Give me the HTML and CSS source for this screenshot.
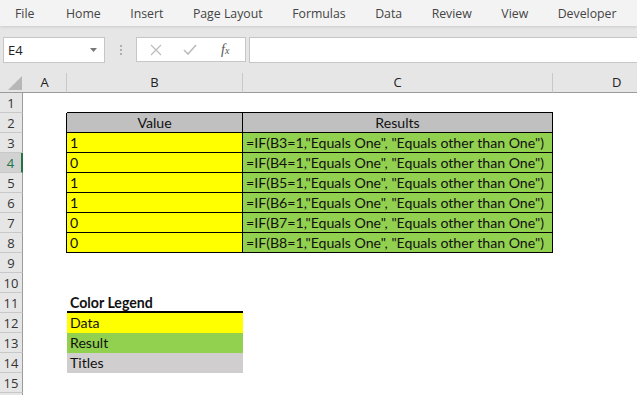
FILE: index.html
```html
<!DOCTYPE html>
<html lang="en">
<head>
  <meta charset="UTF-8">
  <title>IF formula</title>
  <link rel="stylesheet" href="styles.css">
</head>
<body>

  <div class="menubar">
    <span class="first">File</span>
    <span>Home</span>
    <span>Insert</span>
    <span>Page Layout</span>
    <span>Formulas</span>
    <span>Data</span>
    <span>Review</span>
    <span>View</span>
    <span>Developer</span>
  </div>

  <div class="toolbar">
    <div class="namebox">
      <span>E4</span>
      <svg width="7" height="4" viewBox="0 0 7 4"><path d="M0 0h7L3.5 4z" fill="#777"/></svg>
    </div>
    <div class="grip"><i></i><i></i><i></i></div>
    <div class="fxbox">
      <svg width="12" height="12" viewBox="0 0 12 12"><path d="M1 1l10 10M11 1L1 11" stroke="#bdbdbd" stroke-width="1.3" fill="none"/></svg>
      <svg width="14" height="12" viewBox="0 0 14 12"><path d="M1 6l4 4 8-9" stroke="#bdbdbd" stroke-width="1.6" fill="none"/></svg>
      <span class="fx">f<sub>x</sub></span>
    </div>
    <div class="formula"></div>
  </div>

  <div class="sheet">
    <div class="row colhead">
      <div class="rh corner"><svg width="14" height="14" viewBox="0 0 14 14"><path d="M14 0v14H0z" fill="#b7b7b7"/></svg></div>
      <div class="c a">A</div>
      <div class="c b">B</div>
      <div class="c cc">C</div>
      <div class="c d">D</div>
    </div>

    <div class="row"><div class="rh">1</div><div class="c a"></div><div class="c b top"></div><div class="c cc top"></div></div>
    <div class="row"><div class="rh">2</div><div class="c a edge"></div><div class="c b box title center">Value</div><div class="c cc box title center">Results</div></div>
    <div class="row"><div class="rh">3</div><div class="c a edge"></div><div class="c b box data">1</div><div class="c cc box result">=IF(B3=1,"Equals One", "Equals other than One")</div></div>
    <div class="row"><div class="rh sel">4</div><div class="c a edge"></div><div class="c b box data">0</div><div class="c cc box result">=IF(B4=1,"Equals One", "Equals other than One")</div></div>
    <div class="row"><div class="rh">5</div><div class="c a edge"></div><div class="c b box data">1</div><div class="c cc box result">=IF(B5=1,"Equals One", "Equals other than One")</div></div>
    <div class="row"><div class="rh">6</div><div class="c a edge"></div><div class="c b box data">1</div><div class="c cc box result">=IF(B6=1,"Equals One", "Equals other than One")</div></div>
    <div class="row"><div class="rh">7</div><div class="c a edge"></div><div class="c b box data">0</div><div class="c cc box result">=IF(B7=1,"Equals One", "Equals other than One")</div></div>
    <div class="row"><div class="rh">8</div><div class="c a edge"></div><div class="c b box data">0</div><div class="c cc box result">=IF(B8=1,"Equals One", "Equals other than One")</div></div>
    <div class="row"><div class="rh">9</div></div>
    <div class="row"><div class="rh">10</div></div>
    <div class="row"><div class="rh">11</div><div class="c a"></div><div class="c b legend-head">Color Legend</div></div>
    <div class="row"><div class="rh">12</div><div class="c a"></div><div class="c b fill data">Data</div></div>
    <div class="row"><div class="rh">13</div><div class="c a"></div><div class="c b fill result">Result</div></div>
    <div class="row"><div class="rh">14</div><div class="c a"></div><div class="c b fill titles">Titles</div></div>
    <div class="row"><div class="rh">15</div></div>
    <div class="row"><div class="rh"></div></div>
  </div>

</body>
</html>
```

FILE: styles.css
```css
body {
  margin: 0;
  width: 637px;
  height: 395px;
  overflow: hidden;
  background: #fff;
  font-family: "Open Sans", "Noto Sans", sans-serif;
}

.menubar {
  height: 26px;
  display: flex;
  align-items: center;
  gap: 29.5px;
  padding-left: 15px;
  background: #f3f3f3;
  box-shadow: 0 1px 3px rgba(0, 0, 0, 0.12);
  position: relative;
  font-size: 12.3px;
  color: #444;
}

.menubar .first { margin-right: 2px; }

.toolbar {
  height: 47px;
  box-sizing: border-box;
  padding: 11px 0 0 3px;
  display: flex;
  align-items: flex-start;
  background: #e6e6e6;
}

.namebox {
  width: 102px;
  height: 26px;
  box-sizing: border-box;
  border: 1px solid #c6c6c6;
  background: #fff;
  display: flex;
  align-items: center;
  justify-content: space-between;
  padding: 0 7px 0 4px;
  font-size: 13px;
  color: #222;
}

.grip {
  width: 31px;
  height: 26px;
  display: flex;
  flex-direction: column;
  align-items: center;
  justify-content: center;
  gap: 2px;
}

.grip i {
  width: 2px;
  height: 2px;
  background: #b0b0b0;
}

.fxbox {
  width: 110px;
  height: 25px;
  box-sizing: border-box;
  border: 1px solid #c6c6c6;
  background: #fff;
  display: flex;
  align-items: center;
  gap: 21px;
  padding-left: 13px;
}

.fx {
  font-family: "Liberation Serif", serif;
  font-style: italic;
  font-size: 14px;
  color: #555;
  margin-left: 3px;
}

.fx sub {
  font-size: 10px;
  vertical-align: 0;
}

.formula {
  flex: 1;
  height: 26px;
  margin-left: 3px;
  box-sizing: border-box;
  border: 1px solid #c6c6c6;
  border-right: none;
  background: #fff;
}

.sheet {
  font-family: "Lato", "Open Sans", sans-serif;
  font-size: 14.15px;
  color: #111;
}

.row {
  display: flex;
  height: 20px;
}

.rh {
  width: 23px;
  flex: none;
  height: 20px;
  box-sizing: border-box;
  background: #e6e6e6;
  border-right: 1px solid #9b9b9b;
  border-bottom: 1px solid #c8c8c8;
  text-align: center;
  font-family: "Open Sans", sans-serif;
  font-size: 13px;
  line-height: 20px;
  color: #333;
}

.rh.sel {
  color: #217346;
  background: #d2d2d2;
  border-right: 2px solid #217346;
}

.c {
  height: 20px;
  box-sizing: border-box;
  flex: none;
  line-height: 19px;
  padding-left: 3px;
  white-space: nowrap;
  overflow: hidden;
}

.a { width: 44px; }
.b { width: 176px; }
.cc { width: 310px; }
.d { flex: 1; }

.colhead {
  height: 20px;
  background: #e6e6e6;
}

.colhead .rh {
  border-bottom: 1px solid #9b9b9b;
  border-right: none;
  position: relative;
}

.corner svg {
  position: absolute;
  right: 1px;
  bottom: 2px;
}

.colhead .c {
  border-bottom: 1px solid #9b9b9b;
  border-right: 1px solid #c8c8c8;
  text-align: center;
  padding: 0;
  font-family: "Open Sans", sans-serif;
  font-size: 13px;
  color: #222;
}

.colhead .d {
  border-right: none;
  text-align: left;
  padding-left: 59px;
}

.top { border-bottom: 1px solid #000; }
.edge { border-right: 1px solid #000; }

.box {
  border-right: 1px solid #000;
  border-bottom: 1px solid #000;
}

.center {
  text-align: center;
  padding-left: 0;
}

.title { background: #c0c0c0; }
.data { background: #ffff00; }
.result { background: #92d050; }
.titles { background: #d0cece; }

.legend-head {
  font-weight: bold;
  border-bottom: 2px solid #000;
}

.fill { line-height: 20px; }
```
